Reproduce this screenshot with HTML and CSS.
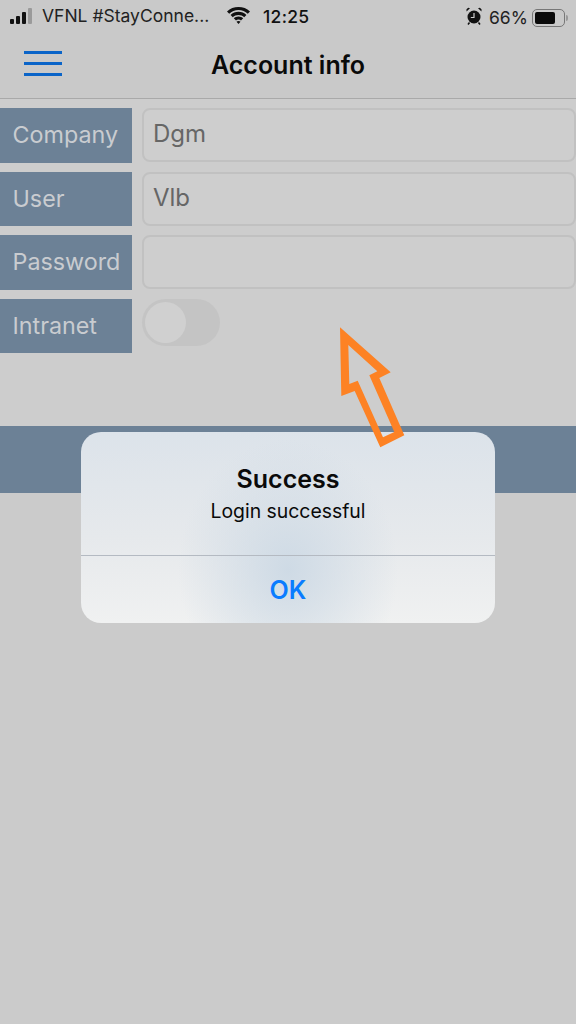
FILE: index.html
```html
<!DOCTYPE html>
<html lang="en">
<head>
<meta charset="utf-8">
<title>Account info</title>
<link rel="stylesheet" href="styles.css">
</head>
<body>
<div class="page">
  <header class="top">
    <div class="status">
      <div class="status-left">
        <svg class="signal" width="26" height="16" viewBox="0 0 26 16"><rect x="0" y="11" width="4" height="5" rx="1" fill="#111"/><rect x="6" y="8" width="4" height="8" rx="1" fill="#111"/><rect x="12" y="4" width="4" height="12" rx="1" fill="#111"/><rect x="18" y="0" width="4" height="16" rx="1" fill="#9a9a9a"/></svg>
        <span class="carrier">VFNL #StayConne...</span>
      </div>
      <svg class="wifi" width="23" height="17" viewBox="0 0 23 17"><path d="M11.5 3c3.6 0 6.9 1.4 9.300 3.700L23 4.400C19.900 1.500 15.900 0 11.500 0S3.100 1.500 0 4.400l2.200 2.300C4.600 4.400 7.900 3 11.500 3z" fill="#111"/><path d="M11.500 8c2.200 0 4.200.8 5.700 2.200l2.200-2.300C17.300 6 14.500 4.800 11.500 4.800S5.700 6 3.600 7.900l2.200 2.300C7.300 8.800 9.300 8 11.500 8z" fill="#111"/><path d="M11.500 12.600c1 0 1.900.4 2.500 1l2.200-2.300c-1.200-1.200-2.900-1.900-4.700-1.900s-3.500.7-4.700 1.900L9 13.600c.6-.6 1.500-1 2.500-1zM11.500 17l2-2.300c-.5-.5-1.200-.8-2-.8s-1.500.3-2 .8z" fill="#111"/></svg>
      <span class="clock">12:25</span>
      <div class="status-right">
        <svg class="alarm" width="16" height="18" viewBox="0 0 16 18"><circle cx="8" cy="10" r="6.500" fill="#111"/><path d="M8 6v4.500H4.800" fill="none" stroke="#ccc" stroke-width="1.200"/><path d="M0.500 4.500 4 1.200 2.200 .8.500 2.300zM15.500 4.500 12 1.200l1.800-.4 1.700 1.500z" fill="#111"/><path d="M3.500 15.500 2 17.500M12.500 15.500l1.500 2" stroke="#111" stroke-width="1.500"/></svg>
        <span class="battery-text">66%</span>
        <span class="battery"><span class="battery-level"></span></span>
        <span class="battery-cap"></span>
      </div>
    </div>
    <div class="nav">
      <button class="menu" type="button" aria-label="Menu"><span></span><span></span><span></span></button>
      <h1 class="title">Account info</h1>
    </div>
  </header>

  <main class="form">
    <div class="row"><div class="label">Company</div><div class="field">Dgm</div></div>
    <div class="row"><div class="label">User</div><div class="field">Vlb</div></div>
    <div class="row"><div class="label">Password</div><div class="field"></div></div>
    <div class="row"><div class="label">Intranet</div><div class="toggle"><span class="knob"></span></div></div>
  </main>
  <div class="band"></div>

  <svg class="arrow" width="576" height="1024" viewBox="0 0 576 1024"><path fill-rule="evenodd" fill="#fd8224" d="M340 327.300 390.700 372.300 379.300 378 404.300 435.300 380.300 447.300 354.700 391 341.300 396ZM348.300 345 349.300 384 357.700 380.700 383 437.300 394.300 432 369.300 375.300 377.300 371.300Z"/></svg>

  <div class="dialog" role="alertdialog">
    <div class="dialog-body">
      <div class="dialog-title">Success</div>
      <div class="dialog-text">Login successful</div>
    </div>
    <div class="dialog-action">OK</div>
  </div>
</div>
</body>
</html>
```
FILE: styles.css
```css
* { box-sizing: border-box; }
html, body { margin: 0; padding: 0; }
body { font-family: Inter, "Liberation Sans", sans-serif; background: #cbcbcb; }
.page { position: relative; width: 576px; height: 1024px; overflow: hidden; background: #cbcbcb; }

.top { height: 99px; background: #c9c9c9; border-bottom: 1px solid #a9a9a9; }
.status { position: relative; height: 31px; display: flex; align-items: center; color: #111; }
.status-left { display: flex; align-items: center; padding-left: 10px; gap: 6px; }
.signal { display: block; }
.carrier { font-size: 17.500px; color: #222; white-space: nowrap; }
.wifi { position: absolute; left: 227px; top: 7px; }
.clock { position: absolute; left: 263px; top: 6px; font-size: 17.500px; font-weight: 500; letter-spacing: .3px; }
.status-right { position: absolute; left: 466px; top: 7px; display: flex; align-items: center; }
.alarm { display: block; margin-top: -3px; }
.battery-text { margin-left: 7px; font-size: 17.500px; color: #222; width: 43px; white-space: nowrap; }
.battery { width: 33px; height: 18px; border: 1px solid #777; border-radius: 5px; padding: 2px; display: block; }
.battery-level { display: block; width: 20px; height: 12px; background: #0a0a0a; border-radius: 2px; }
.battery-cap { width: 2px; height: 6px; background: #999; border-radius: 0 2px 2px 0; margin-left: 1px; }

.nav { position: relative; height: 67px; display: flex; align-items: center; justify-content: center; }
.menu { position: absolute; left: 24px; top: 20px; width: 38px; height: 25px; padding: 0; border: 0; background: none; display: flex; flex-direction: column; justify-content: space-between; }
.menu span { display: block; height: 3px; background: #0a64c8; }
.title { margin: 0; font-size: 25px; line-height: 30px; font-weight: 600; color: #0a0a0a; }

.form { background: #cdcdcd; height: 327px; padding-top: 9px; display: flex; flex-direction: column; gap: 9px; }
.row { display: flex; height: 54.500px; gap: 10px; }
.label { width: 132px; background: #6c8196; color: #c9ccd0; font-size: 23.300px; line-height: 53px; padding-left: 12.500px; white-space: nowrap; }
.field { flex: 1; height: 54px; border: 2px solid #c1c1c1; border-radius: 8px; background: #cecece; color: #666; font-size: 24px; line-height: 48px; padding-left: 9px; }
.toggle { width: 78px; height: 47px; border-radius: 24px; background: #c4c4c4; padding: 3px 0 0 3px; }
.knob { display: block; width: 41px; height: 41px; border-radius: 50%; background: #d0d0d0; }

.band { height: 67px; background: #6c8196; }

.arrow { position: absolute; left: 0; top: 0; z-index: 2; }

.dialog { position: absolute; z-index: 1; left: 81px; top: 432px; width: 414px; height: 191px; border-radius: 20px; overflow: hidden; color: #0a0a0a; text-align: center;
  background:
    radial-gradient(ellipse 110px 130px at 50% 72%, #cedae5 0%, rgba(206,218,229,0) 100%),
    linear-gradient(180deg, #dce3ea 0%, #e6e9ec 55%, #f0f1f1 100%); }
.dialog-body { height: 124px; padding-top: 30px; border-bottom: 1px solid #b4bac2; }
.dialog-title { font-size: 25px; line-height: 34px; font-weight: 600; }
.dialog-text { font-size: 19.400px; line-height: 30px; }
.dialog-action { height: 67px; font-size: 25px; line-height: 68px; font-weight: 600; color: #0a7cff; }
```
